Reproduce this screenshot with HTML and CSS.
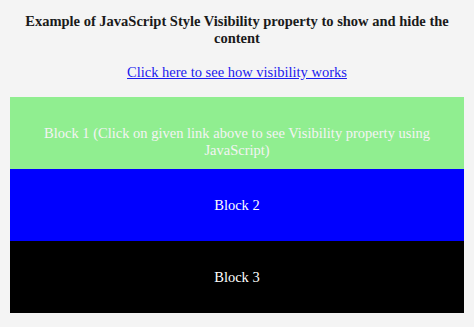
FILE: index.html
```html
<!DOCTYPE html>
<html>
<head>
<meta charset="utf-8">
<link rel="stylesheet" href="styles.css">
</head>
<body>
<div class="page">
  <h3 class="title">Example of JavaScript Style Visibility property to show and hide the content</h3>
  <p class="link-row"><a href="#" class="link">Click here to see how visibility works</a></p>
  <div class="block block-green">Block 1 (Click on given link above to see Visibility property using JavaScript)</div>
  <div class="block block-blue">Block 2</div>
  <div class="block block-black">Block 3</div>
</div>
</body>
</html>
```

FILE: styles.css
```css
html, body {
  margin: 0;
  padding: 0;
  background: #f4f4f4;
}
.page {
  padding: 13px 10px 13px;
  font-family: "Liberation Serif", "Times New Roman", serif;
}
.title {
  margin: 0;
  font-size: 14.5px;
  font-weight: bold;
  line-height: 17px;
  text-align: center;
  color: #1a1a1a;
}
.link-row {
  margin: 0;
  padding: 17px 0 16px;
  text-align: center;
  font-size: 14.5px;
  line-height: 17px;
}
.link {
  color: #1a1aee;
  text-decoration: underline;
}
.block {
  box-sizing: border-box;
  height: 72px;
  padding-top: 28px;
  text-align: center;
  color: #fff;
  font-size: 14.5px;
  line-height: 16.5px;
}
.block-green { background: #90ee90; color: #f4f4f4; }
.block-blue { background: #0000ff; }
.block-black { background: #000; }
```
